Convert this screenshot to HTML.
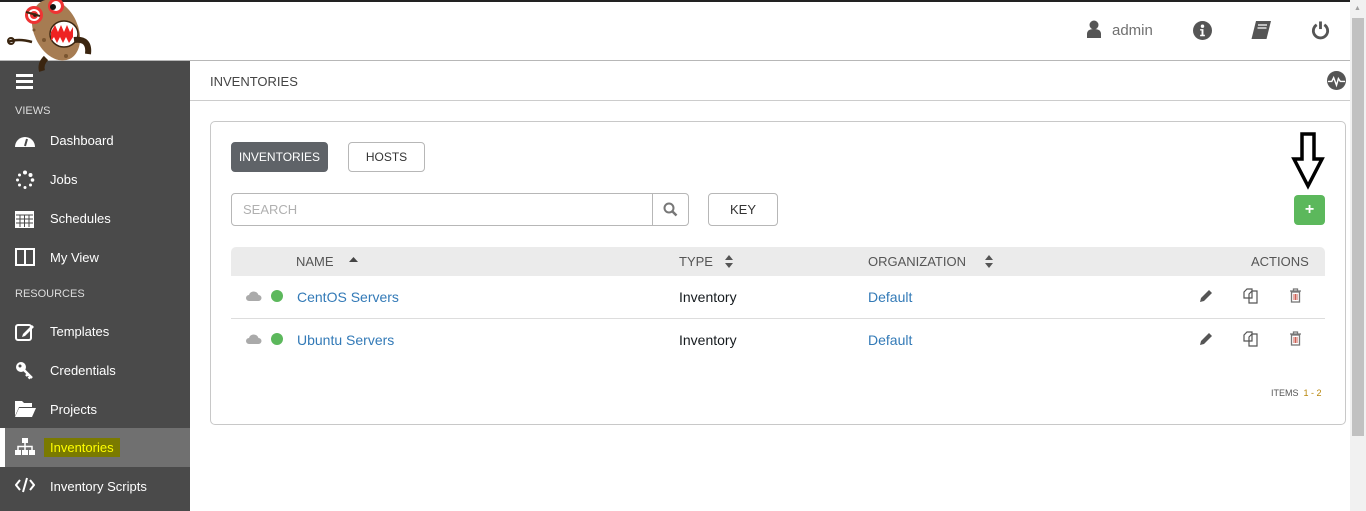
<!DOCTYPE html>
<html><head><style>
*{box-sizing:border-box;margin:0;padding:0}
body{width:1366px;height:511px;overflow:hidden;font-family:"Liberation Sans",sans-serif;background:#fff;position:relative;color:#161b1f}
.abs{position:absolute}
.top{left:0;top:0;width:1350px;height:61px;border-top:2px solid #222;border-bottom:1px solid #b7b7b7;background:#fff}
.side{left:0;top:61px;width:190px;height:450px;background:#4a4a4a;color:#fff}
.sec{position:absolute;left:15px;font-size:11px;color:#ddd}
.item{position:absolute;left:0;width:190px;height:39px;font-size:13px;color:#fff}
.item span.t{position:absolute;left:50px;top:12px}
.item svg{position:absolute;left:15px;top:10px}
.crumb{left:190px;top:61px;width:1160px;height:40px;border-bottom:1px solid #ccc;background:#fff}
.panel{left:210px;top:121px;width:1136px;height:304px;border:1px solid #c8c8c8;border-radius:5px;background:#fff}
.btn{position:absolute;height:30px;border:1px solid #b7b7b7;border-radius:4px;font-size:12px;text-align:center;line-height:28px;color:#333}
.link{color:#337ab7}
.sb{left:1350px;top:0;width:16px;height:511px;background:#f1f1f1}
.srt{position:absolute;font-size:9px;line-height:7px;color:#444}
</style></head><body>
<div class="abs top"></div>
<div class="abs side">
  <div style="position:absolute;left:16px;top:13px;width:17px"><div style="height:3px;background:#fff;margin-bottom:3px"></div><div style="height:3px;background:#fff;margin-bottom:3px"></div><div style="height:3px;background:#fff"></div></div>
  <div class="sec" style="top:44px">VIEWS</div>
  <div class="item" style="top:60px"><svg width="20" height="17" viewBox="0 0 20 17"><path d="M0 16a10 10 0 0 1 20 0z" fill="#fff"/><path d="M10 15l2-7" stroke="#4a4a4a" stroke-width="2"/></svg><span class="t">Dashboard</span></div>
  <div class="item" style="top:99px"><svg width="20" height="20" viewBox="0 0 20 20" fill="#fff"><circle cx="10" cy="2.5" r="2"/><circle cx="15.5" cy="5" r="2"/><circle cx="17.5" cy="10" r="1.8"/><circle cx="15.5" cy="15" r="1.5"/><circle cx="10" cy="17.5" r="1.5"/><circle cx="4.5" cy="15" r="1.5"/><circle cx="2.5" cy="10" r="1.5"/><circle cx="4.5" cy="5" r="1.5"/></svg><span class="t">Jobs</span></div>
  <div class="item" style="top:138px"><svg width="19" height="19" viewBox="0 0 19 19"><rect x="0" y="2" width="19" height="17" fill="#fff"/><path d="M1 6h17M5 6v12M9.5 6v12M14 6v12M1 10h17M1 14h17" stroke="#4a4a4a"/></svg><span class="t">Schedules</span></div>
  <div class="item" style="top:177px"><svg width="20" height="18" viewBox="0 0 20 18"><rect x="1" y="1" width="18" height="16" fill="none" stroke="#fff" stroke-width="2"/><path d="M10 1v16" stroke="#fff" stroke-width="2"/></svg><span class="t">My View</span></div>
  <div class="sec" style="top:227px">RESOURCES</div>
  <div class="item" style="top:251px"><svg width="20" height="19" viewBox="0 0 20 19"><rect x="1" y="3" width="15" height="15" rx="2" fill="none" stroke="#fff" stroke-width="2"/><path d="M8 12l9-9 2 2-9 9-3 1z" fill="#fff"/></svg><span class="t">Templates</span></div>
  <div class="item" style="top:290px"><svg width="20" height="20" viewBox="0 0 20 20"><circle cx="6" cy="6" r="5" fill="#fff"/><circle cx="5" cy="5" r="1.5" fill="#4a4a4a"/><path d="M9 9l8 8M13 13l-2 2M15.5 15.5l-2 2" stroke="#fff" stroke-width="2.5"/></svg><span class="t">Credentials</span></div>
  <div class="item" style="top:329px"><svg width="21" height="17" viewBox="0 0 21 17"><path d="M0 1h7l2 2h8v4h-13l-4 9z" fill="#fff"/><path d="M4 8h17l-4 9h-17z" fill="#fff"/></svg><span class="t">Projects</span></div>
  <div class="item" style="top:367px;background:#707070"><div style="position:absolute;left:0;top:0;width:5px;height:39px;background:#fff"></div><svg width="20" height="18" viewBox="0 0 20 18" fill="#fff"><rect x="7" y="0" width="6" height="5"/><rect x="0" y="12" width="6" height="5"/><rect x="7" y="12" width="6" height="5"/><rect x="14" y="12" width="6" height="5"/><path d="M10 5v7M3 12v-3.5h14v3.5" stroke="#fff" stroke-width="1.5" fill="none"/></svg><span class="t" style="left:44px;top:10px;background:#7a7a00;padding:2px 6px;color:#ff0">Inventories</span></div>
  <div class="item" style="top:406px"><svg width="20" height="16" viewBox="0 0 20 16"><path d="M5 3l-4 5 4 5M15 3l4 5-4 5M12 1l-4 14" stroke="#fff" stroke-width="2" fill="none"/></svg><span class="t">Inventory Scripts</span></div>
</div>
<svg class="abs" style="left:4px;top:0px;z-index:5" width="92" height="72" viewBox="0 0 92 72">
  <ellipse cx="52" cy="30" rx="22" ry="32" fill="#a67c52" transform="rotate(-25 52 30)"/>
  <circle cx="40" cy="40" r="2" fill="#7a5530"/><circle cx="62" cy="56" r="2" fill="#7a5530"/><circle cx="30" cy="30" r="1.5" fill="#7a5530"/>
  <circle cx="30" cy="15" r="9" fill="#e33"/><circle cx="30" cy="15" r="6" fill="#fff"/><circle cx="30" cy="15" r="4" fill="#e33"/><circle cx="31" cy="15" r="1.8" fill="#111"/>
  <circle cx="52" cy="6" r="8" fill="#e33"/><circle cx="52" cy="6" r="5" fill="#fff"/><circle cx="49" cy="7" r="3" fill="#111"/>
  <path d="M22 12l14 4" stroke="#3a2510" stroke-width="2"/>
  <ellipse cx="60" cy="34" rx="14" ry="13" fill="#fff" stroke="#3a2510" stroke-width="1.5"/>
  <path d="M47 32 l4 -7 3 7 3 -7 3 7 3 -7 3 7 3 -5 v10 l-4 6 -3 -6 -3 6 -3 -6 -3 6 -3 -6 -3 4 z" fill="#e22"/>
  <path d="M4 42 q10 -4 24 0" stroke="#3a2510" stroke-width="2.5" fill="none"/><circle cx="7" cy="41" r="3" fill="none" stroke="#3a2510" stroke-width="2"/>
  <path d="M70 40 q16 -2 14 14" stroke="#3a2510" stroke-width="6" fill="none"/>
  <path d="M42 58 q-6 6 -4 13" stroke="#3a2510" stroke-width="6" fill="none"/>
</svg>
<svg class="abs" style="left:1087px;top:20px" width="14" height="18" viewBox="0 0 14 18"><circle cx="7" cy="5" r="4.5" fill="#555"/><path d="M0 18v-4q0-5 7-5t7 5v4z" fill="#555"/></svg>
<div class="abs" style="left:1112px;top:22px;font-size:15px;color:#707070">admin</div>
<svg class="abs" style="left:1193px;top:21px" width="19" height="19" viewBox="0 0 20 20"><circle cx="10" cy="10" r="10" fill="#555"/><circle cx="10" cy="5.5" r="1.8" fill="#fff"/><path d="M7.5 8.5h3.5v6h1.5v1.5h-5v-1.5h1.5v-4.5h-1.5z" fill="#fff"/></svg>
<svg class="abs" style="left:1251px;top:21px" width="20" height="19" viewBox="0 0 20 19"><path d="M5 0h15l-4 16h-15z" fill="#555"/><path d="M1 16h15l-0.5 2h-15z" fill="#555"/><path d="M7 4h9M6.5 7h9" stroke="#fff" stroke-width="1.3"/></svg>
<svg class="abs" style="left:1311px;top:20px" width="19" height="20" viewBox="0 0 20 20"><path d="M6 4.5a7.5 7.5 0 1 0 8 0" stroke="#555" stroke-width="3" fill="none"/><path d="M10 1v8" stroke="#555" stroke-width="3"/></svg>
<div class="abs crumb"><div class="abs" style="left:20px;top:13px;font-size:13px;color:#444">INVENTORIES</div>
<svg class="abs" style="left:1137px;top:10px" width="19" height="19" viewBox="0 0 20 20"><circle cx="10" cy="10" r="10" fill="#555"/><path d="M1 11h4l2-4 3 8 2-7 2 3h5" stroke="#fff" stroke-width="1.5" fill="none"/></svg></div>
<div class="abs panel">
  <div class="btn" style="left:20px;top:20px;width:97px;background:#5f6368;border-color:#5f6368;color:#fff">INVENTORIES</div>
  <div class="btn" style="left:137px;top:20px;width:77px">HOSTS</div>
  <div class="btn" style="left:20px;top:71px;width:458px;height:33px;text-align:left;padding-left:11px;line-height:31px;color:#b0b0b0;font-size:13px">SEARCH
    <div style="position:absolute;left:420px;top:0;width:36px;height:31px;border-left:1px solid #b7b7b7"><svg style="position:absolute;left:10px;top:8px" width="15" height="15" viewBox="0 0 15 15"><circle cx="6" cy="6" r="4.5" stroke="#777" stroke-width="2" fill="none"/><path d="M9.5 9.5l4 4" stroke="#777" stroke-width="2.5"/></svg></div></div>
  <div class="btn" style="left:497px;top:71px;width:70px;height:33px;line-height:31px;font-size:13px">KEY</div>
  <svg class="abs" style="left:1080px;top:10px" width="34" height="58" viewBox="0 0 34 58"><path d="M11 2h12v25h8l-14 27-14-27h8z" fill="none" stroke="#000" stroke-width="3.5"/></svg>
  <div class="abs" style="left:1083px;top:73px;width:31px;height:30px;background:#5cb85c;border-radius:4px;color:#fff;text-align:center;line-height:30px;font-size:16px;font-weight:bold">+</div>
  <div class="abs" style="left:20px;top:125px;width:1094px;height:29px;background:#ebebeb;border-radius:5px 5px 0 0;font-size:13px;color:#555">
    <span class="abs" style="left:65px;top:7px">NAME</span>
    <svg class="abs" style="left:118px;top:10px" width="9" height="5"><path d="M0 5l4.5-5 4.5 5z" fill="#444"/></svg>
    <span class="abs" style="left:448px;top:7px">TYPE</span>
    <svg class="abs" style="left:494px;top:8px" width="8" height="13"><path d="M0 5l4-5 4 5zM0 8l4 5 4-5z" fill="#555"/></svg>
    <span class="abs" style="left:637px;top:7px">ORGANIZATION</span>
    <svg class="abs" style="left:754px;top:8px" width="8" height="13"><path d="M0 5l4-5 4 5zM0 8l4 5 4-5z" fill="#555"/></svg>
    <span class="abs" style="left:1020px;top:7px">ACTIONS</span>
  </div>
  <div class="abs" style="left:20px;top:196px;width:1094px;height:1px;background:#ddd"></div>
  <div class="abs" style="left:0;top:154px;width:1134px;height:43px;font-size:14px">
    <svg class="abs" style="left:35px;top:15px" width="16" height="10" viewBox="0 0 16 10"><path d="M3 10a3 3 0 0 1 0-6a5 5 0 0 1 9.5 0a3 3 0 0 1 0 6z" fill="#aaa"/></svg>
    <div class="abs" style="left:60px;top:14px;width:12px;height:12px;border-radius:50%;background:#5cb85c"></div>
    <span class="abs link" style="left:86px;top:13px">CentOS Servers</span><span class="abs" style="left:468px;top:13px">Inventory</span><span class="abs link" style="left:657px;top:13px">Default</span>
    <svg class="abs" style="left:988px;top:13px" width="14" height="14" viewBox="0 0 14 14"><path d="M1 13l1-4 8-8 3 3-8 8z" fill="#555"/></svg>
    <svg class="abs" style="left:1032px;top:12px" width="15" height="16" viewBox="0 0 15 16"><path d="M1 4l3-3h5v9h-8z M6 6l3-3h5v12h-8z" fill="#fff" stroke="#555" stroke-width="1.2"/></svg>
    <svg class="abs" style="left:1078px;top:12px" width="13" height="15" viewBox="0 0 13 15"><path d="M1 3h11M4.5 3v-2h4v2" stroke="#777" stroke-width="1.3" fill="none"/><rect x="2.5" y="4" width="8" height="10" fill="none" stroke="#777" stroke-width="1.3"/><path d="M5 6v6M6.5 6v6M8 6v6" stroke="#c0392b" stroke-width="0.8"/></svg>
  </div>
  <div class="abs" style="left:0;top:197px;width:1134px;height:43px;font-size:14px">
    <svg class="abs" style="left:35px;top:15px" width="16" height="10" viewBox="0 0 16 10"><path d="M3 10a3 3 0 0 1 0-6a5 5 0 0 1 9.5 0a3 3 0 0 1 0 6z" fill="#aaa"/></svg>
    <div class="abs" style="left:60px;top:14px;width:12px;height:12px;border-radius:50%;background:#5cb85c"></div>
    <span class="abs link" style="left:86px;top:13px">Ubuntu Servers</span><span class="abs" style="left:468px;top:13px">Inventory</span><span class="abs link" style="left:657px;top:13px">Default</span>
    <svg class="abs" style="left:988px;top:13px" width="14" height="14" viewBox="0 0 14 14"><path d="M1 13l1-4 8-8 3 3-8 8z" fill="#555"/></svg>
    <svg class="abs" style="left:1032px;top:12px" width="15" height="16" viewBox="0 0 15 16"><path d="M1 4l3-3h5v9h-8z M6 6l3-3h5v12h-8z" fill="#fff" stroke="#555" stroke-width="1.2"/></svg>
    <svg class="abs" style="left:1078px;top:12px" width="13" height="15" viewBox="0 0 13 15"><path d="M1 3h11M4.5 3v-2h4v2" stroke="#777" stroke-width="1.3" fill="none"/><rect x="2.5" y="4" width="8" height="10" fill="none" stroke="#777" stroke-width="1.3"/><path d="M5 6v6M6.5 6v6M8 6v6" stroke="#c0392b" stroke-width="0.8"/></svg>
  </div>
  <div class="abs" style="left:1060px;top:266px;font-size:9px;color:#555">ITEMS &nbsp;<span style="color:#b8860b">1 - 2</span></div>
</div>
<div class="abs sb"><div style="position:absolute;left:2px;top:18px;width:12px;height:418px;background:#c1c1c1"></div><div style="position:absolute;left:4px;top:5px;font-size:7px;color:#a0a0a0">▲</div></div>
</body></html>
